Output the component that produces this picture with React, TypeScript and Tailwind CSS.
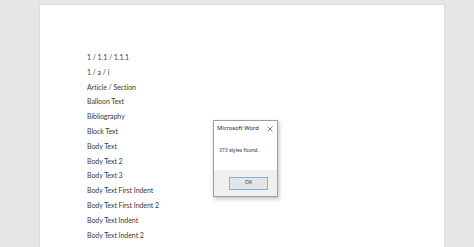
export default function App() {
  const items = [
    "1 / 1.1 / 1.1.1",
    "1 / a / i",
    "Article / Section",
    "Balloon Text",
    "Bibliography",
    "Block Text",
    "Body Text",
    "Body Text 2",
    "Body Text 3",
    "Body Text First Indent",
    "Body Text First Indent 2",
    "Body Text Indent",
    "Body Text Indent 2",
  ];
  return (
    <div className="relative w-[474px] h-[247px] overflow-hidden bg-[#e6e6e6] flex justify-start">
      <div className="ml-[39px] mt-[4px] w-[406px] h-[260px] bg-white border border-[#dcdcdc] shrink-0">
        <div className="pt-[45px] pl-[47px] flex flex-col gap-0 text-[7px] tracking-[-0.05px] leading-[14.8px] text-[#3a3a3a]" style={{ fontFamily: 'Lato, sans-serif' }}>
          {items.map((t) => (
            <div key={t}>{t}</div>
          ))}
        </div>
      </div>
      <div
        className="absolute left-[213px] top-[120px] w-[65px] h-[77px] bg-white border border-[#a0a0a0] shadow-[1px_2px_4px_rgba(0,0,0,0.25)] flex flex-col text-[#222]"
        style={{ fontFamily: '"Noto Sans", sans-serif' }}
      >
        <div className="h-[15px] flex items-center justify-between pl-[3px] pr-[3px] text-[5.8px]">
          <span>Microsoft Word</span>
          <svg width="6" height="6" viewBox="0 0 6 6" className="mr-[1px]">
            <path d="M0.5 0.5 L5.5 5.5 M5.5 0.5 L0.5 5.5" stroke="#333" strokeWidth="0.6" />
          </svg>
        </div>
        <div className="flex-1 pl-[5px] pt-[11px] text-[5px] text-[#333]">373 styles found.</div>
        <div className="h-[26px] bg-[#f0f0f0] flex items-center justify-end pr-[9px]">
          <div className="w-[39px] h-[13px] border border-[#7fb1e3] bg-[#e5e5e5] flex items-center justify-center text-[5px] text-[#333]">
            OK
          </div>
        </div>
      </div>
    </div>
  );
}
